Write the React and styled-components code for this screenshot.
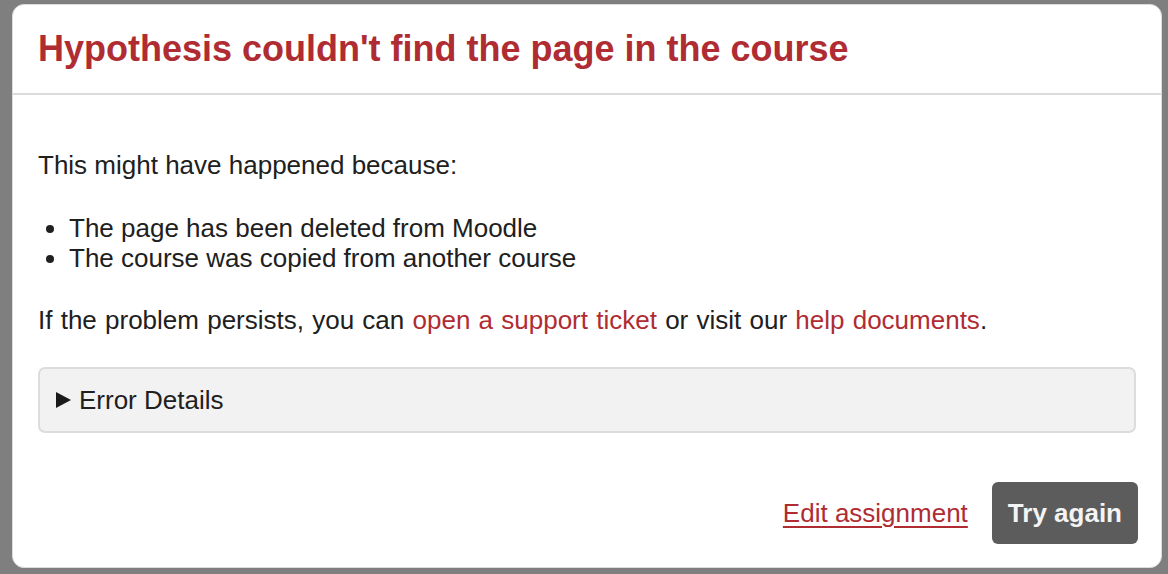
import styled, { createGlobalStyle } from "styled-components";

const GlobalStyle = createGlobalStyle`
  html, body {
    margin: 0;
    padding: 0;
    background: #7f7f7f;
  }
  body {
    font-family: "Liberation Sans", Arial, sans-serif;
  }
`;

const Backdrop = styled.div`
  width: 1168px;
  height: 574px;
  padding: 4px 6px 6px 12px;
  box-sizing: border-box;
`;

const Dialog = styled.div`
  width: 1150px;
  height: 564px;
  box-sizing: border-box;
  background: #fff;
  border: 1px solid #dcdcdc;
  border-radius: 12px;
  display: flex;
  flex-direction: column;
  overflow: hidden;
`;

const Header = styled.header`
  height: 88px;
  flex-shrink: 0;
  display: flex;
  align-items: center;
  padding: 0 25px;
  border-bottom: 2px solid #dbdbdb;
`;

const Title = styled.h1`
  margin: 0;
  font-size: 36px;
  font-weight: 700;
  color: #b02c33;
`;

const Body = styled.div`
  flex: 1;
  padding: 55px 25px 0;
  font-size: 26px;
  line-height: 30px;
  color: #202020;
`;

const Para = styled.p`
  margin: 0 0 ${(p) => p.gap || 33}px;
  word-spacing: ${(p) => p.spacing || 0}px;
`;

const List = styled.ul`
  margin: 0 0 32px;
  padding-left: 31px;
`;

const Link = styled.a`
  color: #b02c33;
  text-decoration: ${(p) => (p.underline ? "underline" : "none")};
  text-underline-offset: 4px;
  text-decoration-thickness: 2px;
`;

const Details = styled.details`
  background: #f2f2f2;
  border: 2px solid #dcdcdc;
  border-radius: 7px;
`;

const Summary = styled.summary`
  padding: 16px 16px;
  font-size: 26px;
  line-height: 30px;
  cursor: pointer;
  list-style: none;
  display: flex;
  align-items: center;
  gap: 8px;
  &::-webkit-details-marker {
    display: none;
  }
`;

const Triangle = styled.span`
  width: 0;
  height: 0;
  border-top: 8px solid transparent;
  border-bottom: 8px solid transparent;
  border-left: 15px solid #1a1a1a;
`;

const Footer = styled.footer`
  display: flex;
  justify-content: flex-end;
  align-items: center;
  gap: 24px;
  padding: 0 23px 23px;
  font-size: 26px;
`;

const Button = styled.button`
  height: 62px;
  padding: 0 16px;
  border: none;
  border-radius: 6px;
  background: #5c5c5c;
  color: #f4f4f4;
  font-family: inherit;
  font-size: 26px;
  font-weight: 700;
  cursor: pointer;
`;

export default function App() {
  return (
    <>
      <GlobalStyle />
      <Backdrop>
        <Dialog>
          <Header>
            <Title>Hypothesis couldn't find the page in the course</Title>
          </Header>
          <Body>
            <Para>This might have happened because:</Para>
            <List>
              <li>The page has been deleted from Moodle</li>
              <li>The course was copied from another course</li>
            </List>
            <Para gap={32} spacing={1}>
              If the problem persists, you can{" "}
              <Link href="#">open a support ticket</Link> or visit our{" "}
              <Link href="#">help documents</Link>.
            </Para>
            <Details>
              <Summary>
                <Triangle />
                Error Details
              </Summary>
            </Details>
          </Body>
          <Footer>
            <Link href="#" underline>
              Edit assignment
            </Link>
            <Button>Try again</Button>
          </Footer>
        </Dialog>
      </Backdrop>
    </>
  );
}
